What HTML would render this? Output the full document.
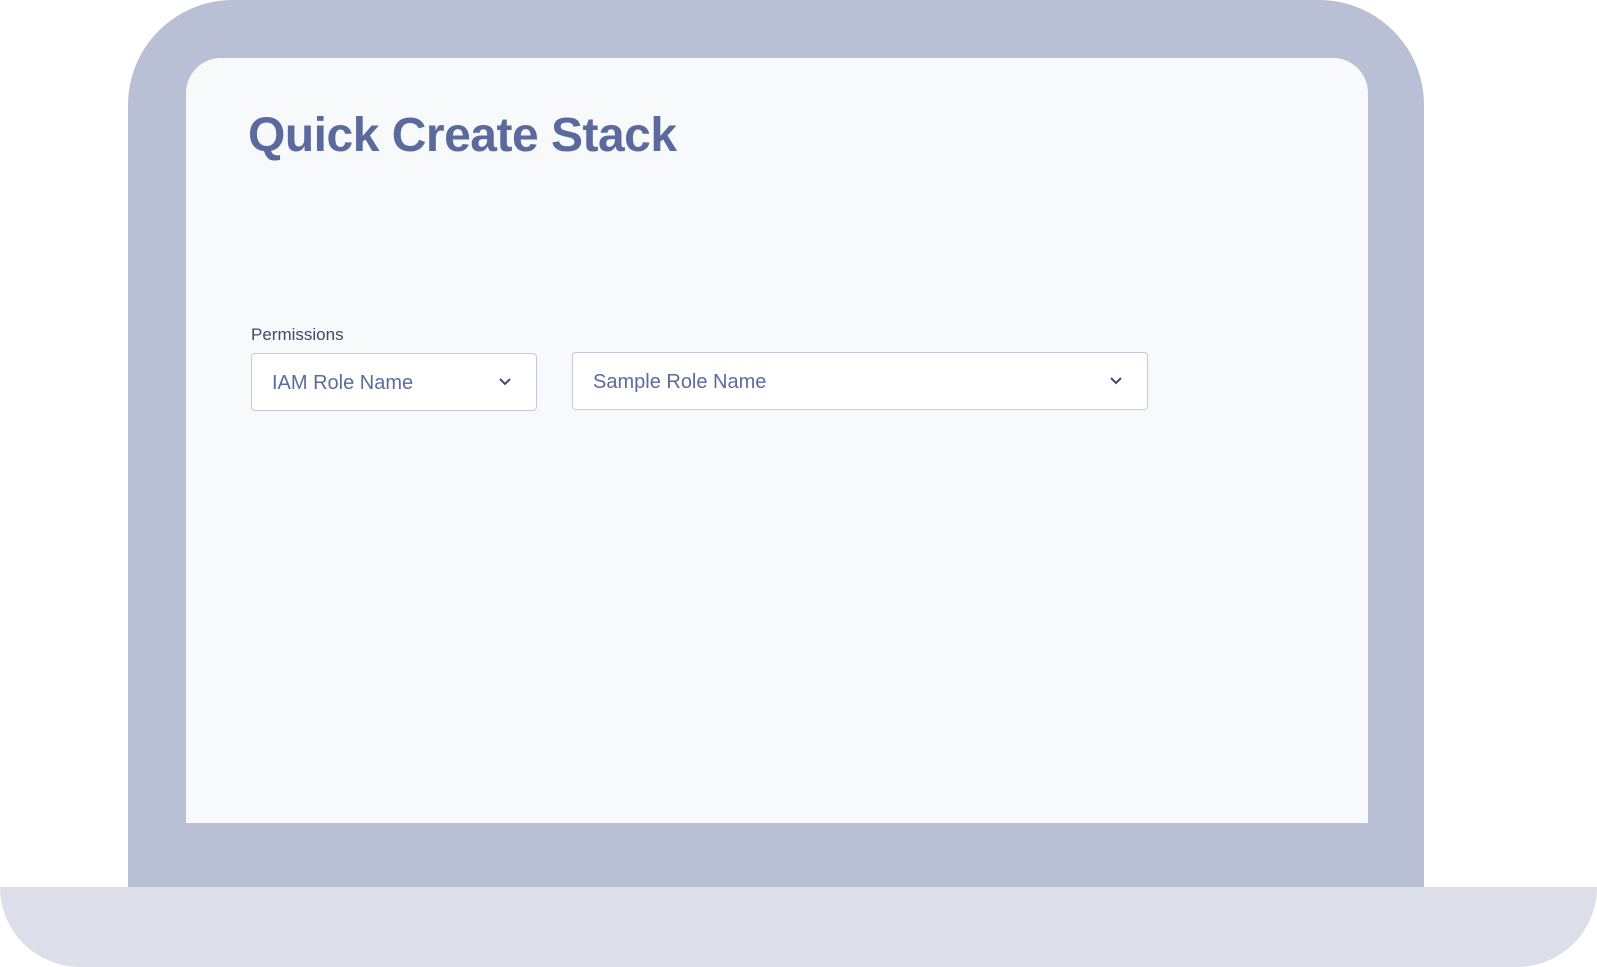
<!DOCTYPE html>
<html><head><style>
body{margin:0;width:1597px;height:967px;background:#fff;position:relative;overflow:hidden;font-family:"Liberation Sans",sans-serif}
.frame{position:absolute;left:128px;top:0;width:1296px;height:900px;background:#b9bfd4;border-radius:105px 105px 0 0}
.screen{position:absolute;left:186px;top:58px;width:1182px;height:765px;background:#f8f9fb;border-radius:35px 35px 0 0}
.base{position:absolute;left:0;top:887px;width:1597px;height:80px;background:#dcdeea;border-radius:0 0 80px 80px}
h1{position:absolute;left:248px;top:108px;margin:0;font-size:48px;font-weight:bold;color:#5a6a9c;letter-spacing:-0.5px}
.lbl{position:absolute;left:251px;top:325px;font-size:17px;color:#3f4a6b}
.box{position:absolute;top:353px;height:58px;background:#fff;border:1.5px solid #c3c8dc;border-radius:4px;box-sizing:border-box}
.box span{position:absolute;left:20px;top:18px;font-size:20px;color:#5d6b9c}
.box svg{position:absolute;right:24px;top:23px}
</style></head><body>
<div class="frame"></div>
<div class="screen"></div>
<div class="base"></div>
<h1>Quick Create Stack</h1>
<div class="lbl">Permissions</div>
<div class="box" style="left:251px;width:286px"><span>IAM Role Name</span><svg width="14" height="9" viewBox="0 0 14 9"><path d="M2 2l5 5 5-5" fill="none" stroke="#3f4a6b" stroke-width="2"/></svg></div>
<div class="box" style="left:572px;width:576px;top:352px"><span>Sample Role Name</span><svg width="14" height="9" viewBox="0 0 14 9"><path d="M2 2l5 5 5-5" fill="none" stroke="#3f4a6b" stroke-width="2"/></svg></div>
</body></html>
